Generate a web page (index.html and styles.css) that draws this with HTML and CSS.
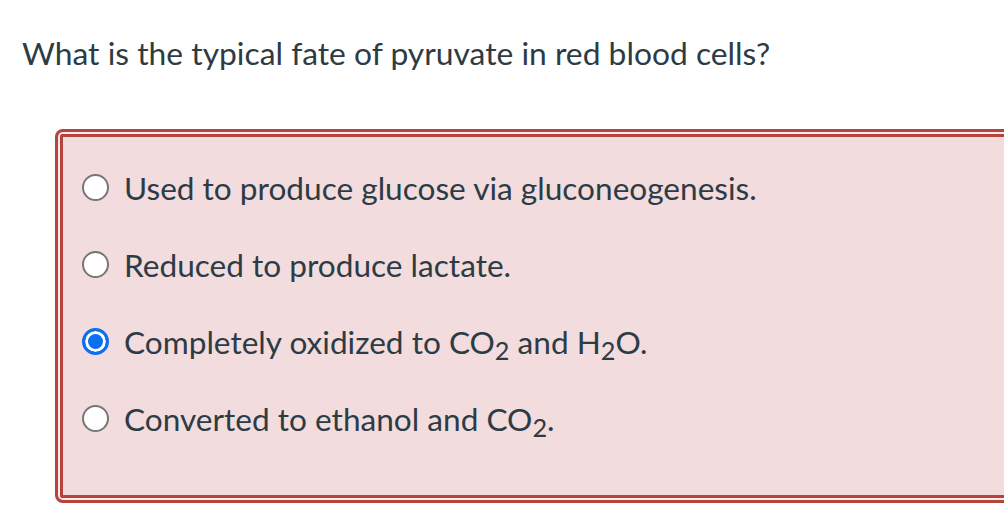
FILE: index.html
```html
<!DOCTYPE html>
<html>
<head>
<meta charset="utf-8">
<link rel="stylesheet" href="styles.css">
</head>
<body>
<div class="question">What is the typical fate of pyruvate in red blood cells?</div>
<div class="answers">
  <div class="option"><span class="radio"></span><span class="label">Used to produce glucose via gluconeogenesis.</span></div>
  <div class="option"><span class="radio"></span><span class="label">Reduced to produce lactate.</span></div>
  <div class="option"><span class="radio checked"></span><span class="label">Completely oxidized to CO<sub>2</sub> and H<sub>2</sub>O.</span></div>
  <div class="option"><span class="radio"></span><span class="label">Converted to ethanol and CO<sub>2</sub>.</span></div>
</div>
</body>
</html>
```
FILE: styles.css
```css
html, body {
  margin: 0;
  padding: 0;
  background: #ffffff;
  overflow: hidden;
}
body {
  font-family: Lato, "Open Sans", sans-serif;
  color: #2d3b45;
  width: 1004px;
  height: 520px;
}
.question {
  font-size: 31.8px;
  line-height: 38px;
  padding: 34px 0 0 22px;
  height: 62px;
}
.answers {
  margin: 38px 0 0 60px;
  width: 990px;
  background: #f2dcde;
  border: 3px solid #b5443f;
  border-right: none;
  border-radius: 3px 0 0 3px;
  box-shadow: 0 0 0 2px #f7eaea, 0 0 0 5px #b5443f;
  padding: 12px 0 0 19px;
  box-sizing: border-box;
  height: 364px;
}
.option {
  display: flex;
  align-items: center;
  gap: 15px;
  height: 77px;
  font-size: 31.6px;
}
.radio {
  width: 27px;
  height: 27px;
  box-sizing: border-box;
  border-radius: 50%;
  border: 2px solid #767676;
  background: #ffffff;
  flex: none;
}
.radio.checked {
  border: 3px solid #0b6ff0;
  background: #0b6ff0;
  box-shadow: inset 0 0 0 3px #ffffff;
}
.label {
  white-space: nowrap;
}
sub {
  font-size: 0.8em;
  line-height: 0;
  vertical-align: -0.25em;
}
```
